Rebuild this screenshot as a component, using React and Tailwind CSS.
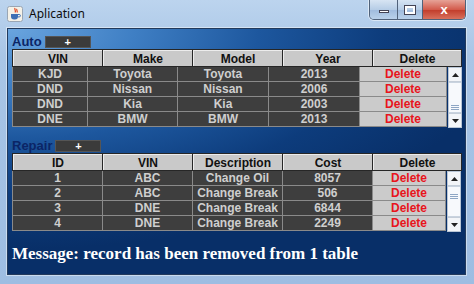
import React from 'react';

const AUTOS = [
  ['KJD', 'Toyota', 'Toyota', '2013'],
  ['DND', 'Nissan', 'Nissan', '2006'],
  ['DND', 'Kia', 'Kia', '2003'],
  ['DNE', 'BMW', 'BMW', '2013'],
];

const REPAIRS = [
  ['1', 'ABC', 'Change Oil', '8057'],
  ['2', 'ABC', 'Change Break', '506'],
  ['3', 'DNE', 'Change Break', '6844'],
  ['4', 'DNE', 'Change Break', '2249'],
];

function JavaIcon() {
  return (
    <svg width="16" height="16" viewBox="0 0 16 16">
      <rect x="0.5" y="0.5" width="15" height="15" rx="2" fill="#f4f1e8" stroke="#9aa6b4" />
      <path d="M8 2c-1 1.5 1.5 2.5 0 4.5M10 3c-1 1 1 2 0 3.5" stroke="#e0451f" strokeWidth="1.2" fill="none" />
      <path d="M4 8h7v2.5a3 3 0 0 1-3 3h-1a3 3 0 0 1-3-3z" fill="#3d6fb5" />
      <path d="M11 8.5h1.2a1.2 1.2 0 0 1 0 2.4H11" stroke="#3d6fb5" fill="none" />
    </svg>
  );
}

function Scrollbar({ thumbTop, thumbHeight, gripTop }) {
  return (
    <div className="relative w-[14px] h-[61px] bg-[#eef2f7] border border-[#b9c6d6]">
      <div className="absolute left-0 top-0 w-[12px] h-[14px] bg-[#f3f5f8] border-b border-[#c4cdd8] flex items-center justify-center">
        <svg width="7" height="4" viewBox="0 0 7 4"><path d="M0 4L3.5 0L7 4z" fill="#222" /></svg>
      </div>
      <div
        className="absolute left-0 w-[12px] bg-[#f7f9fc] border-y border-[#c9d3df]"
        style={{ top: thumbTop, height: thumbHeight }}
      />
      <div className="absolute left-[2px] w-[8px] flex flex-col gap-px" style={{ top: gripTop }}>
        <div className="h-px bg-[#8ea6c4]" />
        <div className="h-px bg-[#8ea6c4]" />
        <div className="h-px bg-[#8ea6c4]" />
      </div>
      <div className="absolute left-0 bottom-0 w-[12px] h-[14px] bg-[#f3f5f8] border-t border-[#c4cdd8] flex items-center justify-center">
        <svg width="7" height="4" viewBox="0 0 7 4"><path d="M0 0L3.5 4L7 0z" fill="#222" /></svg>
      </div>
    </div>
  );
}

function Table({ label, headers, rows, bodyCols, scroll }) {
  return (
    <div className="flex flex-col">
      <div className="flex items-end h-[14px]">
        <span className="text-[13px] font-bold leading-none text-[#0b2566]">{label}</span>
        <div className="ml-[3px] h-[12px] w-[46px] bg-[#3b3b3b] border border-[#555] flex items-center justify-center text-white text-[11px] font-bold leading-none">
          +
        </div>
      </div>
      <div className="mt-px grid grid-cols-[89px_89px_89px_89px_88px] gap-px bg-[#262626] border border-[#262626] w-[450px]">
        {headers.map((h) => (
          <div key={h} className="h-[16px] bg-[#c9c9c9] border-t border-l border-[#ececec] flex items-center justify-center text-[12px] font-bold text-[#111]">
            {h}
          </div>
        ))}
      </div>
      <div className="flex items-start">
        <div className={`grid ${bodyCols} gap-px bg-[#8a8a8a] border-x border-b border-[#8a8a8a]`}>
          {rows.map((r, i) => (
            <React.Fragment key={i}>
              {r.map((c, j) => (
                <div key={j} className="h-[14px] bg-[#3e3e3e] flex items-center justify-center text-[12px] font-bold text-[#cfcfcf] leading-none">
                  {c}
                </div>
              ))}
              <div className="h-[14px] bg-[#cbcbcb] flex items-center justify-center text-[12px] font-bold text-[#e8141c] leading-none">
                Delete
              </div>
            </React.Fragment>
          ))}
        </div>
        <div className="ml-px">
          <Scrollbar {...scroll} />
        </div>
      </div>
    </div>
  );
}

export default function App() {
  return (
    <div className="w-[474px] h-[284px] overflow-hidden bg-[linear-gradient(180deg,#bcd4ee_0%,#a8c5e6_20%,#9dbde2_100%)] font-['Liberation_Sans',Arial,sans-serif] flex flex-col">
      <div className="h-[28px] flex items-start relative">
        <div className="flex items-center gap-[6px] pl-[7px] pt-[6px]">
          <JavaIcon />
          <span className="text-[12px] text-[#0d0d0d] font-['Noto_Sans',sans-serif] leading-none">Aplication</span>
        </div>
        <div className="absolute right-[8px] top-0 flex h-[20px] border border-t-0 border-[#50627a] rounded-b-[5px] overflow-hidden shadow-[0_0_0_1px_rgba(255,255,255,0.5)]">
          <div className="w-[28px] bg-[linear-gradient(180deg,#d7e5f3_0%,#b6cde6_50%,#9fbbdd_51%,#b9d1ea_100%)] border-r border-[#50627a] flex items-center justify-center">
            <div className="w-[10px] h-[3px] bg-white border border-[#445] mt-[4px]" />
          </div>
          <div className="w-[25px] bg-[linear-gradient(180deg,#d7e5f3_0%,#b6cde6_50%,#9fbbdd_51%,#b9d1ea_100%)] border-r border-[#50627a] flex items-center justify-center">
            <div className="w-[10px] h-[8px] border-2 border-white outline outline-1 outline-[#445]" />
          </div>
          <div className="w-[42px] bg-[linear-gradient(180deg,#e6a297_0%,#d35b4c_50%,#c13b29_51%,#d8705c_100%)] flex items-center justify-center text-white font-bold text-[13px] leading-none">
            x
          </div>
        </div>
      </div>
      <div className="mx-[7px] mr-[8px] h-[247px] border border-[#223a5c] shadow-[0_0_0_1px_rgba(255,255,255,0.45)] bg-[radial-gradient(ellipse_110%_90%_at_0%_0%,#6aa5df_0%,#3f7fc4_25%,#1d579e_50%,#0d3c7c_75%,#082f68_100%)] pl-[4px] pt-[5px]">
        <Table
          label="Auto"
          headers={['VIN', 'Make', 'Model', 'Year', 'Delete']}
          rows={AUTOS}
          bodyCols="grid-cols-[74px_89px_90px_90px_86px]"
          scroll={{ thumbTop: 14, thumbHeight: 31, gripTop: 37 }}
        />
        <div className="h-[10px]" />
        <Table
          label="Repair"
          headers={['ID', 'VIN', 'Description', 'Cost', 'Delete']}
          rows={REPAIRS}
          bodyCols="grid-cols-[89px_89px_89px_89px_72px]"
          scroll={{ thumbTop: 14, thumbHeight: 31, gripTop: 22 }}
        />
        <div className="mt-[13px] text-[17px] font-bold text-white font-['Liberation_Serif',serif] leading-none">
          Message: record has been removed from 1 table
        </div>
      </div>
    </div>
  );
}
